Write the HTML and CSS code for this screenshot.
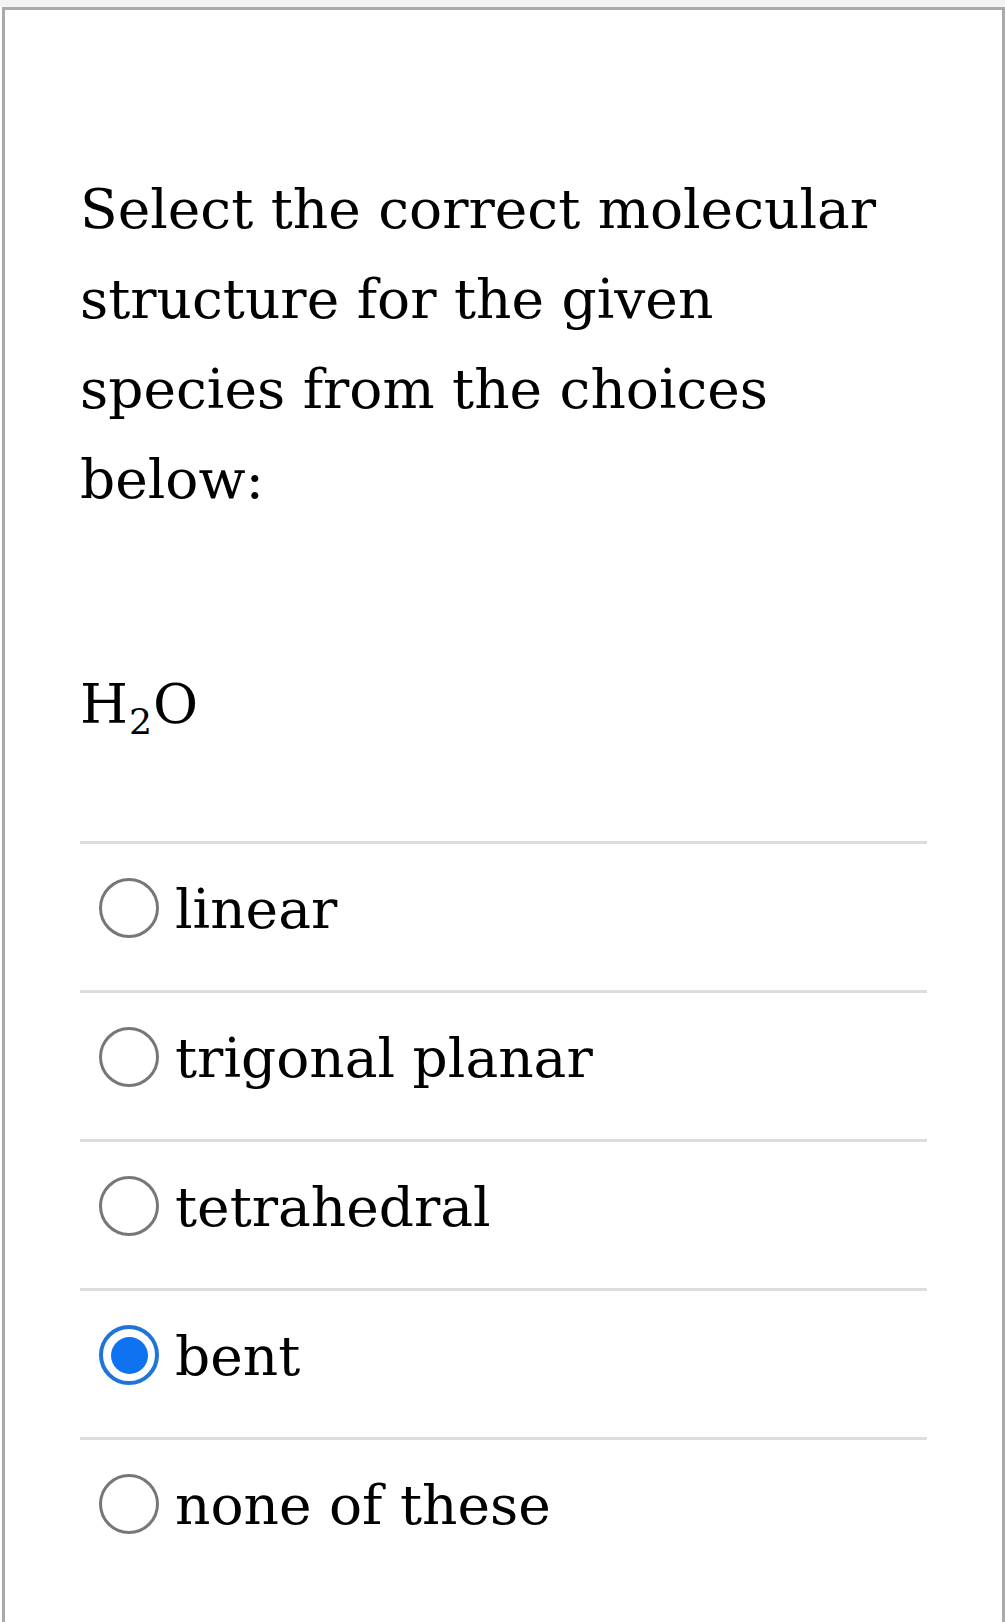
FILE: index.html
```html
<!DOCTYPE html>
<html lang="en">
<head>
<meta charset="utf-8">
<title>Molecular structure question</title>
<link rel="stylesheet" href="styles.css">
</head>
<body>
<div class="topstrip"></div>
<main class="frame">
  <p class="question">Select the correct molecular structure for the given species from the choices below:</p>
  <p class="species">H<sub>2</sub>O</p>
  <ul class="choices">
    <li class="choice"><span class="radio"></span><span class="label">linear</span></li>
    <li class="choice"><span class="radio"></span><span class="label">trigonal planar</span></li>
    <li class="choice"><span class="radio"></span><span class="label">tetrahedral</span></li>
    <li class="choice"><span class="radio checked"></span><span class="label">bent</span></li>
    <li class="choice"><span class="radio"></span><span class="label">none of these</span></li>
  </ul>
</main>
</body>
</html>
```
FILE: styles.css
```css
html, body {
  margin: 0;
  padding: 0;
  background: #ffffff;
  overflow: hidden;
}

body {
  font-family: "DejaVu Serif", "Liberation Serif", serif;
  color: #000;
  font-size: 55px;
  line-height: 90px;
}

.topstrip {
  height: 7px;
  background: #f3f3f3;
}

.frame {
  display: block;
  box-sizing: border-box;
  min-height: calc(100vh - 7px);
  margin-left: 2px;
  border: 3px solid #aaaaaa;
  border-bottom: none;
  padding: 154px 75px 20px 75px;
}

.question {
  margin: 0;
}

.species {
  margin: 135px 0 0 0;
}

.species sub {
  font-size: 0.66em;
  line-height: 0;
  vertical-align: -0.3em;
  margin: 0 1px;
}

.choices {
  list-style: none;
  margin: 92px 0 0 0;
  padding: 0;
}

.choice {
  display: flex;
  align-items: flex-start;
  border-top: 3px solid #dddddd;
  padding: 20px 0 36px 19px;
}

.radio {
  flex: none;
  box-sizing: border-box;
  width: 60px;
  height: 60px;
  margin-top: 14px;
  margin-right: 16px;
  border: 3px solid #777777;
  border-radius: 50%;
  display: flex;
  align-items: center;
  justify-content: center;
}

.radio.checked {
  border: 4px solid #1e74d8;
}

.radio.checked::after {
  content: "";
  width: 37px;
  height: 37px;
  border-radius: 50%;
  background: #0f72f0;
}

.label {
  white-space: nowrap;
}
```
